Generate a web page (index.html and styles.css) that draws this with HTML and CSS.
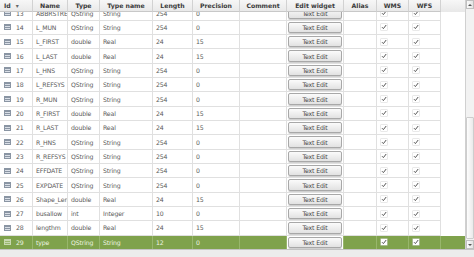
FILE: index.html
```html
<!DOCTYPE html>
<html lang="en">
<head>
<meta charset="UTF-8">
<title>Fields</title>
<link rel="stylesheet" href="styles.css">
</head>
<body>
<div class="window">
    <div class="view">
        <div class="grid">
            <div class="row head">
                <div class="cell id-head">Id <span class="sort">&#9662;</span></div>
                <div class="cell">Name</div>
                <div class="cell">Type</div>
                <div class="cell">Type name</div>
                <div class="cell">Length</div>
                <div class="cell">Precision</div>
                <div class="cell">Comment</div>
                <div class="cell">Edit widget</div>
                <div class="cell">Alias</div>
                <div class="cell">WMS</div>
                <div class="cell">WFS</div>
            </div>
            <div class="body">
                <div class="rows">
                    <div class="row"><div class="cell idc"><i class="ico"></i>13</div><div class="cell">ABBRSTREET</div><div class="cell">QString</div><div class="cell">String</div><div class="cell">254</div><div class="cell">0</div><div class="cell"></div><div class="cell btn-cell"><span class="btn">Text Edit</span></div><div class="cell"></div><div class="cell"><i class="chk"></i></div><div class="cell"><i class="chk"></i></div></div>
                    <div class="row"><div class="cell idc"><i class="ico"></i>14</div><div class="cell">L_MUN</div><div class="cell">QString</div><div class="cell">String</div><div class="cell">254</div><div class="cell">0</div><div class="cell"></div><div class="cell btn-cell"><span class="btn">Text Edit</span></div><div class="cell"></div><div class="cell"><i class="chk"></i></div><div class="cell"><i class="chk"></i></div></div>
                    <div class="row"><div class="cell idc"><i class="ico"></i>15</div><div class="cell">L_FIRST</div><div class="cell">double</div><div class="cell">Real</div><div class="cell">24</div><div class="cell">15</div><div class="cell"></div><div class="cell btn-cell"><span class="btn">Text Edit</span></div><div class="cell"></div><div class="cell"><i class="chk"></i></div><div class="cell"><i class="chk"></i></div></div>
                    <div class="row"><div class="cell idc"><i class="ico"></i>16</div><div class="cell">L_LAST</div><div class="cell">double</div><div class="cell">Real</div><div class="cell">24</div><div class="cell">15</div><div class="cell"></div><div class="cell btn-cell"><span class="btn">Text Edit</span></div><div class="cell"></div><div class="cell"><i class="chk"></i></div><div class="cell"><i class="chk"></i></div></div>
                    <div class="row"><div class="cell idc"><i class="ico"></i>17</div><div class="cell">L_HNS</div><div class="cell">QString</div><div class="cell">String</div><div class="cell">254</div><div class="cell">0</div><div class="cell"></div><div class="cell btn-cell"><span class="btn">Text Edit</span></div><div class="cell"></div><div class="cell"><i class="chk"></i></div><div class="cell"><i class="chk"></i></div></div>
                    <div class="row"><div class="cell idc"><i class="ico"></i>18</div><div class="cell">L_REFSYS</div><div class="cell">QString</div><div class="cell">String</div><div class="cell">254</div><div class="cell">0</div><div class="cell"></div><div class="cell btn-cell"><span class="btn">Text Edit</span></div><div class="cell"></div><div class="cell"><i class="chk"></i></div><div class="cell"><i class="chk"></i></div></div>
                    <div class="row"><div class="cell idc"><i class="ico"></i>19</div><div class="cell">R_MUN</div><div class="cell">QString</div><div class="cell">String</div><div class="cell">254</div><div class="cell">0</div><div class="cell"></div><div class="cell btn-cell"><span class="btn">Text Edit</span></div><div class="cell"></div><div class="cell"><i class="chk"></i></div><div class="cell"><i class="chk"></i></div></div>
                    <div class="row"><div class="cell idc"><i class="ico"></i>20</div><div class="cell">R_FIRST</div><div class="cell">double</div><div class="cell">Real</div><div class="cell">24</div><div class="cell">15</div><div class="cell"></div><div class="cell btn-cell"><span class="btn">Text Edit</span></div><div class="cell"></div><div class="cell"><i class="chk"></i></div><div class="cell"><i class="chk"></i></div></div>
                    <div class="row"><div class="cell idc"><i class="ico"></i>21</div><div class="cell">R_LAST</div><div class="cell">double</div><div class="cell">Real</div><div class="cell">24</div><div class="cell">15</div><div class="cell"></div><div class="cell btn-cell"><span class="btn">Text Edit</span></div><div class="cell"></div><div class="cell"><i class="chk"></i></div><div class="cell"><i class="chk"></i></div></div>
                    <div class="row"><div class="cell idc"><i class="ico"></i>22</div><div class="cell">R_HNS</div><div class="cell">QString</div><div class="cell">String</div><div class="cell">254</div><div class="cell">0</div><div class="cell"></div><div class="cell btn-cell"><span class="btn">Text Edit</span></div><div class="cell"></div><div class="cell"><i class="chk"></i></div><div class="cell"><i class="chk"></i></div></div>
                    <div class="row"><div class="cell idc"><i class="ico"></i>23</div><div class="cell">R_REFSYS</div><div class="cell">QString</div><div class="cell">String</div><div class="cell">254</div><div class="cell">0</div><div class="cell"></div><div class="cell btn-cell"><span class="btn">Text Edit</span></div><div class="cell"></div><div class="cell"><i class="chk"></i></div><div class="cell"><i class="chk"></i></div></div>
                    <div class="row"><div class="cell idc"><i class="ico"></i>24</div><div class="cell">EFFDATE</div><div class="cell">QString</div><div class="cell">String</div><div class="cell">254</div><div class="cell">0</div><div class="cell"></div><div class="cell btn-cell"><span class="btn">Text Edit</span></div><div class="cell"></div><div class="cell"><i class="chk"></i></div><div class="cell"><i class="chk"></i></div></div>
                    <div class="row"><div class="cell idc"><i class="ico"></i>25</div><div class="cell">EXPDATE</div><div class="cell">QString</div><div class="cell">String</div><div class="cell">254</div><div class="cell">0</div><div class="cell"></div><div class="cell btn-cell"><span class="btn">Text Edit</span></div><div class="cell"></div><div class="cell"><i class="chk"></i></div><div class="cell"><i class="chk"></i></div></div>
                    <div class="row"><div class="cell idc"><i class="ico"></i>26</div><div class="cell">Shape_Leng</div><div class="cell">double</div><div class="cell">Real</div><div class="cell">24</div><div class="cell">15</div><div class="cell"></div><div class="cell btn-cell"><span class="btn">Text Edit</span></div><div class="cell"></div><div class="cell"><i class="chk"></i></div><div class="cell"><i class="chk"></i></div></div>
                    <div class="row"><div class="cell idc"><i class="ico"></i>27</div><div class="cell">busallow</div><div class="cell">int</div><div class="cell">Integer</div><div class="cell">10</div><div class="cell">0</div><div class="cell"></div><div class="cell btn-cell"><span class="btn">Text Edit</span></div><div class="cell"></div><div class="cell"><i class="chk"></i></div><div class="cell"><i class="chk"></i></div></div>
                    <div class="row"><div class="cell idc"><i class="ico"></i>28</div><div class="cell">lengthm</div><div class="cell">double</div><div class="cell">Real</div><div class="cell">24</div><div class="cell">15</div><div class="cell"></div><div class="cell btn-cell"><span class="btn">Text Edit</span></div><div class="cell"></div><div class="cell"><i class="chk"></i></div><div class="cell"><i class="chk"></i></div></div>
                    <div class="row selected"><div class="cell idc"><i class="ico"></i>29</div><div class="cell">type</div><div class="cell">QString</div><div class="cell">String</div><div class="cell">12</div><div class="cell">0</div><div class="cell"></div><div class="cell btn-cell"><span class="btn">Text Edit</span></div><div class="cell"></div><div class="cell"><i class="chk"></i></div><div class="cell"><i class="chk"></i></div></div>
                </div>
            </div>
        </div>
        <div class="scrollbar">
            <div class="arrow up"></div>
            <div class="track"><div class="thumb"></div></div>
            <div class="arrow down"></div>
        </div>
    </div>
    <div class="status"></div>
</div>
</body>
</html>
```

FILE: styles.css
```css
body {
    margin: 0;
    padding: 0;
    background-color: #ececec;
    font-family: "DejaVu Sans", sans-serif;
    font-size: 6.2px;
    letter-spacing: -0.15px;
    color: #5a5a5a;
}

.window {
    width: 474px;
    height: 257px;
    display: flex;
    flex-direction: column;
}

.view {
    height: 250px;
    display: flex;
    background-color: white;
    border-bottom: 1px solid #c4c4c4;
    box-sizing: border-box;
}

.grid {
    width: 465px;
    display: flex;
    flex-direction: column;
    overflow: hidden;
}

.row {
    display: grid;
    grid-template-columns: 33px 35px 32px 53px 40px 47px 47px 57px 33px 32px 32px;
    height: 14.33px;
}

.cell {
    display: flex;
    align-items: center;
    padding-left: 3px;
    border-right: 1px solid #e0e0e0;
    border-bottom: 1px solid #e0e0e0;
    white-space: nowrap;
    overflow: hidden;
    box-sizing: border-box;
}

/* header */
.head {
    height: 12px;
    flex: none;
    background: linear-gradient(#f7f7f7, #e8e8e8);
    position: relative;
    z-index: 1;
}

.head .cell {
    justify-content: center;
    padding-left: 0;
    font-weight: bold;
    letter-spacing: 0;
    color: #3a3a3a;
    border-right: 1px solid #d2d2d2;
    border-bottom: 1px solid #c8c8c8;
}

.head .id-head {
    justify-content: flex-start;
    padding-left: 4px;
}

.sort {
    margin-left: 5px;
    font-size: 6px;
    color: #666;
}

.body {
    flex: 1;
    overflow: hidden;
}

.rows {
    margin-top: -5.6px;
}

.idc {
    padding-left: 4px;
}

.ico {
    width: 7px;
    height: 6px;
    margin-right: 5px;
    box-sizing: border-box;
    border: 1px solid #8a95a3;
    background: repeating-linear-gradient(#8a95a3 0 1px, #d9dee6 1px 2px);
}

.btn-cell {
    padding: 1px;
}

.btn {
    flex: 1;
    height: 100%;
    display: flex;
    align-items: center;
    justify-content: center;
    box-sizing: border-box;
    border: 1px solid #a8a8a8;
    border-radius: 2px;
    background: linear-gradient(#fbfbfb, #e2e2e2);
    box-shadow: 0 1px 0 #d0d0d0;
    color: #4a4a4a;
}

.chk {
    width: 6px;
    height: 6px;
    margin-left: 1px;
    background: url("data:image/svg+xml,%3Csvg xmlns='http://www.w3.org/2000/svg' viewBox='0 0 6 6'%3E%3Cpath d='M1 3.2 L2.4 4.6 L5.2 1' fill='none' stroke='%23555' stroke-width='1'/%3E%3C/svg%3E") center/6px 6px no-repeat, white;
    box-shadow: 0 0 0 0.5px #d4d4d4;
}

/* selected row */
.selected {
    background-color: #7fa24c;
    color: #eef4e2;
}

.selected .cell {
    border-right-color: #98b66c;
    border-bottom-color: #7fa24c;
}

.selected .ico {
    border-color: #c8d8b0;
    background: repeating-linear-gradient(#c8d8b0 0 1px, #9ab86e 1px 2px);
}

.selected .btn-cell {
    background-color: white;
}

/* scrollbar */
.scrollbar {
    width: 9px;
    display: flex;
    flex-direction: column;
    background-color: #f2f2f2;
    border-left: 1px solid #d0d0d0;
    box-sizing: border-box;
}

.arrow {
    height: 9px;
    display: flex;
    align-items: center;
    justify-content: center;
    background: linear-gradient(to right, #fafafa, #e4e4e4);
    border: 1px solid #c0c0c0;
    box-sizing: border-box;
}

.arrow::after {
    content: "";
    border-left: 2px solid transparent;
    border-right: 2px solid transparent;
}

.up::after {
    border-bottom: 2px solid #555;
}

.down::after {
    border-top: 2px solid #555;
}

.track {
    flex: 1;
    display: flex;
    flex-direction: column;
    justify-content: flex-end;
}

.thumb {
    height: 120px;
    margin: 1px 0;
    background: linear-gradient(to right, #fdfdfd, #eaeaea);
    border: 1px solid #cdcdcd;
    border-radius: 1px;
}

.status {
    flex: 1;
}
```
